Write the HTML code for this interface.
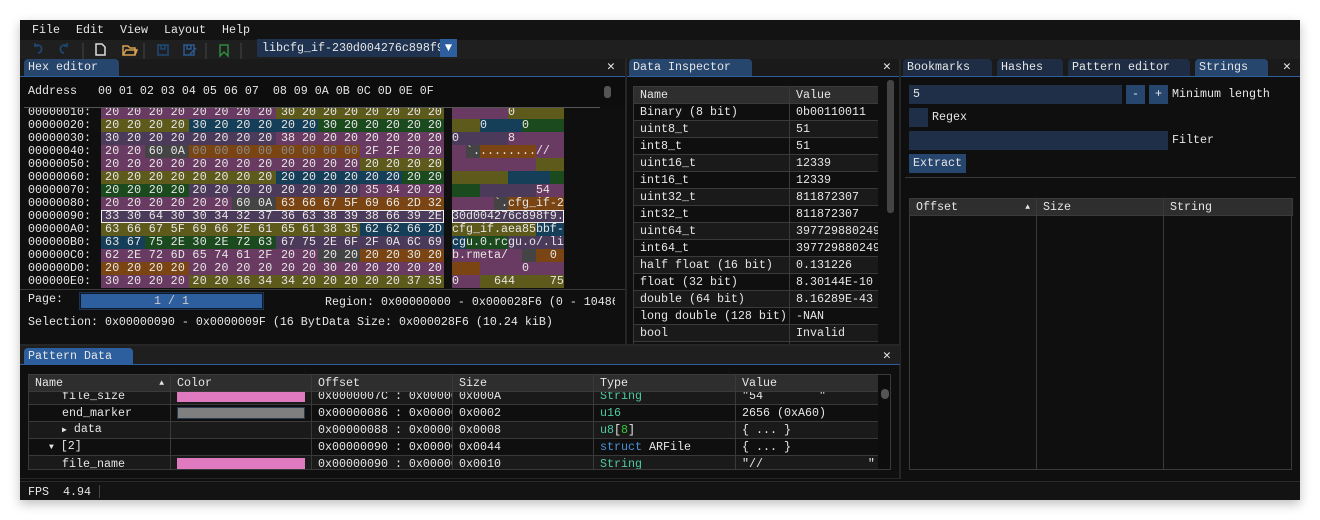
<!DOCTYPE html>
<html><head><meta charset="utf-8"><style>
*{margin:0;padding:0;box-sizing:border-box}
body{width:1320px;height:520px;background:#fff;position:relative;overflow:hidden;font-family:"Liberation Mono","DejaVu Sans Mono",monospace;font-size:11.67px;color:#e6e6e6;line-height:13px}
.a{position:absolute;white-space:pre}
#win{position:absolute;left:20px;top:20px;width:1280px;height:480px;background:#0f0f0f;box-shadow:0 4px 10px rgba(0,0,0,.25)}
.tab{position:absolute;height:17px;background:#1e2d44;border-radius:4px 4px 0 0;padding:2px 4px}
.x{position:absolute;font-size:13px}
.bg{position:absolute;height:13px}
.P{background:#6a3b62}.O{background:#5e5a1c}.B{background:#153e58}.G{background:#1a4a1e}.D{background:#4b3a5a}.R{background:#7a4512}.K{background:#444}
.hx{position:absolute;left:105px;letter-spacing:.29px}
.hx2{position:absolute;left:281px}
.as{position:absolute;left:452px}
table{border-collapse:collapse;position:absolute;table-layout:fixed}
td{border:1px solid #3a3a3a;height:17px;padding:0 6px;white-space:nowrap;overflow:hidden}
td.pre{white-space:pre}
.th td{background:#2e2e2f}
.r1 td{background:#0f0f0f}.r2 td{background:#1a1a1a}
.dim{color:#8a8a8a}
</style></head><body>
<div id="win"></div>
<div class="a" style="left:20px;top:20px;width:1280px;height:20px;background:#131313"></div>
<div class="a" style="left:32px;top:24px">File</div>
<div class="a" style="left:76px;top:24px">Edit</div>
<div class="a" style="left:120px;top:24px">View</div>
<div class="a" style="left:164px;top:24px">Layout</div>
<div class="a" style="left:222px;top:24px">Help</div>
<div class="a" style="left:20px;top:40px;width:1280px;height:19px;background:#1f1f1f"></div>
<svg class="a" style="left:20px;top:36px" width="460" height="25">
<g fill="none" stroke-width="1.5">
<path d="M18 17 A4 4 0 1 0 15 10 L15 7 M15 10 L18 10" stroke="#1f4a78"/>
<path d="M44 17 A4 4 0 1 1 47 10 L47 7 M47 10 L44 10" stroke="#1f4a78"/>
<path d="M76 8 L82 8 L85 11 L85 19 L76 19 Z" stroke="#ddd"/>
<path d="M103 10 L108 10 L110 12 L115 12 L115 19 L103 19 Z M103 19 L106 14 L117 14 L115 19" stroke="#d6a050"/>
<path d="M138 9 L148 9 L148 19 L138 19 Z M141 9 L141 13 L145 13 L145 9" stroke="#1f4a78"/>
<path d="M164 9 L174 9 L174 19 L164 19 Z M167 9 L167 13 L171 13 L171 9 M170 18 L176 12" stroke="#2a5a92"/>
<path d="M200 9 L208 9 L208 20 L204 16 L200 20 Z" stroke="#2e8a3a"/>
</g>
<g stroke="#444"><path d="M63 7V23M124 7V23M186 7V23M221 7V23"/></g>
</svg>
<div class="a" style="left:257px;top:39px;width:200px;height:18px;background:#1f3350"></div>
<div class="a" style="left:440px;top:39px;width:17px;height:18px;background:#2d5f9e;color:#fff;text-align:center;font-size:12px;line-height:18px">▼</div>
<div class="a" style="left:262px;top:42px;width:178px;overflow:hidden">libcfg_if-230d004276c898f9</div>

<div class="a" style="left:20px;top:59px;width:605px;height:18px;background:#1a1a1a;border-bottom:1px solid #2d5f9e"></div>
<div class="tab" style="left:24px;top:59px;width:95px;background:#26466e">Hex editor</div>
<div class="x a" style="left:607px;top:60px">✕</div>
<div class="a" style="left:20px;top:78px;width:605px;height:29px;background:#0d0d0d"></div>
<div class="a" style="left:28px;top:85px">Address   00 01 02 03 04 05 06 07  08 09 0A 0B 0C 0D 0E 0F</div>
<div class="a" style="left:604px;top:86px;width:7px;height:12px;background:#555;border-radius:3px"></div>
<div class="a" style="left:24px;top:107px;width:576px;height:182px;overflow:hidden">
<div style="position:absolute;left:-24px;top:-107px;width:700px;height:400px">
<div class="bg P" style="left:101px;top:106px;width:175px"></div><div class="bg O" style="left:276px;top:106px;width:168px"></div>
<div class="bg P" style="left:452px;top:106px;width:56px"></div><div class="bg O" style="left:508px;top:106px;width:56px"></div>
<div class="a" style="left:28px;top:106px">00000010:</div><div class="hx" style="top:106px">20 20 20 20 20 20 20 20</div><div class="hx2" style="top:106px">30 20 20 20 20 20 20 20</div><div class="as" style="top:106px">        0       </div>
<div class="bg O" style="left:101px;top:119px;width:87.5px"></div><div class="bg B" style="left:188.5px;top:119px;width:129.5px"></div><div class="bg G" style="left:318px;top:119px;width:126px"></div>
<div class="bg O" style="left:452px;top:119px;width:28px"></div><div class="bg B" style="left:480px;top:119px;width:42px"></div><div class="bg G" style="left:522px;top:119px;width:42px"></div>
<div class="a" style="left:28px;top:119px">00000020:</div><div class="hx" style="top:119px">20 20 20 20 30 20 20 20</div><div class="hx2" style="top:119px">20 20 30 20 20 20 20 20</div><div class="as" style="top:119px">    0     0     </div>
<div class="bg D" style="left:101px;top:132px;width:175px"></div><div class="bg P" style="left:276px;top:132px;width:168px"></div>
<div class="bg D" style="left:452px;top:132px;width:56px"></div><div class="bg P" style="left:508px;top:132px;width:56px"></div>
<div class="a" style="left:28px;top:132px">00000030:</div><div class="hx" style="top:132px">30 20 20 20 20 20 20 20</div><div class="hx2" style="top:132px">38 20 20 20 20 20 20 20</div><div class="as" style="top:132px">0       8       </div>
<div class="bg P" style="left:101px;top:145px;width:43.75px"></div><div class="bg K" style="left:144.75px;top:145px;width:43.75px"></div><div class="bg R" style="left:188.5px;top:145px;width:171.5px"></div><div class="bg P" style="left:360px;top:145px;width:84px"></div>
<div class="bg P" style="left:452px;top:145px;width:14px"></div><div class="bg K" style="left:466px;top:145px;width:14px"></div><div class="bg R" style="left:480px;top:145px;width:56px"></div><div class="bg P" style="left:536px;top:145px;width:28px"></div>
<div class="a" style="left:28px;top:145px">00000040:</div><div class="hx" style="top:145px">20 20 60 0A <span class="dim">00 00 00 00</span></div><div class="hx2" style="top:145px"><span class="dim">00 00 00 00</span> 2F 2F 20 20</div><div class="as" style="top:145px">  `.........//  </div>
<div class="bg P" style="left:101px;top:158px;width:259px"></div><div class="bg O" style="left:360px;top:158px;width:84px"></div>
<div class="bg P" style="left:452px;top:158px;width:84px"></div><div class="bg O" style="left:536px;top:158px;width:28px"></div>
<div class="a" style="left:28px;top:158px">00000050:</div><div class="hx" style="top:158px">20 20 20 20 20 20 20 20</div><div class="hx2" style="top:158px">20 20 20 20 20 20 20 20</div>
<div class="bg O" style="left:101px;top:171px;width:175px"></div><div class="bg B" style="left:276px;top:171px;width:126px"></div><div class="bg G" style="left:402px;top:171px;width:42px"></div>
<div class="bg O" style="left:452px;top:171px;width:56px"></div><div class="bg B" style="left:508px;top:171px;width:42px"></div><div class="bg G" style="left:550px;top:171px;width:14px"></div>
<div class="a" style="left:28px;top:171px">00000060:</div><div class="hx" style="top:171px">20 20 20 20 20 20 20 20</div><div class="hx2" style="top:171px">20 20 20 20 20 20 20 20</div>
<div class="bg G" style="left:101px;top:184px;width:87.5px"></div><div class="bg D" style="left:188.5px;top:184px;width:171.5px"></div><div class="bg P" style="left:360px;top:184px;width:84px"></div>
<div class="bg G" style="left:452px;top:184px;width:28px"></div><div class="bg D" style="left:480px;top:184px;width:56px"></div><div class="bg P" style="left:536px;top:184px;width:28px"></div>
<div class="a" style="left:28px;top:184px">00000070:</div><div class="hx" style="top:184px">20 20 20 20 20 20 20 20</div><div class="hx2" style="top:184px">20 20 20 20 35 34 20 20</div><div class="as" style="top:184px">            54  </div>
<div class="bg P" style="left:101px;top:197px;width:131.25px"></div><div class="bg K" style="left:232.25px;top:197px;width:43.75px"></div><div class="bg R" style="left:276px;top:197px;width:168px"></div>
<div class="bg P" style="left:452px;top:197px;width:42px"></div><div class="bg K" style="left:494px;top:197px;width:14px"></div><div class="bg R" style="left:508px;top:197px;width:56px"></div>
<div class="a" style="left:28px;top:197px">00000080:</div><div class="hx" style="top:197px">20 20 20 20 20 20 60 0A</div><div class="hx2" style="top:197px">63 66 67 5F 69 66 2D 32</div><div class="as" style="top:197px">      `.cfg_if-2</div>
<div class="bg D" style="left:101px;top:210px;width:343px;border:1px solid #eee"></div>
<div class="bg D" style="left:452px;top:210px;width:112px;border:1px solid #eee"></div>
<div class="a" style="left:28px;top:210px">00000090:</div><div class="hx" style="top:210px">33 30 64 30 30 34 32 37</div><div class="hx2" style="top:210px">36 63 38 39 38 66 39 2E</div><div class="as" style="top:210px">30d004276c898f9.</div>
<div class="bg O" style="left:101px;top:223px;width:259px"></div><div class="bg B" style="left:360px;top:223px;width:84px"></div>
<div class="bg O" style="left:452px;top:223px;width:84px"></div><div class="bg B" style="left:536px;top:223px;width:28px"></div>
<div class="a" style="left:28px;top:223px">000000A0:</div><div class="hx" style="top:223px">63 66 67 5F 69 66 2E 61</div><div class="hx2" style="top:223px">65 61 38 35 62 62 66 2D</div><div class="as" style="top:223px">cfg_if.aea85bbf-</div>
<div class="bg B" style="left:101px;top:236px;width:43.75px"></div><div class="bg G" style="left:144.75px;top:236px;width:131.25px"></div><div class="bg D" style="left:276px;top:236px;width:168px"></div>
<div class="bg B" style="left:452px;top:236px;width:14px"></div><div class="bg G" style="left:466px;top:236px;width:42px"></div><div class="bg D" style="left:508px;top:236px;width:56px"></div>
<div class="a" style="left:28px;top:236px">000000B0:</div><div class="hx" style="top:236px">63 67 75 2E 30 2E 72 63</div><div class="hx2" style="top:236px">67 75 2E 6F 2F 0A 6C 69</div><div class="as" style="top:236px">cgu.0.rcgu.o/.li</div>
<div class="bg P" style="left:101px;top:249px;width:217px"></div><div class="bg K" style="left:318px;top:249px;width:42px"></div><div class="bg R" style="left:360px;top:249px;width:84px"></div>
<div class="bg P" style="left:452px;top:249px;width:70px"></div><div class="bg K" style="left:522px;top:249px;width:14px"></div><div class="bg R" style="left:536px;top:249px;width:28px"></div>
<div class="a" style="left:28px;top:249px">000000C0:</div><div class="hx" style="top:249px">62 2E 72 6D 65 74 61 2F</div><div class="hx2" style="top:249px">20 20 20 20 20 20 30 20</div><div class="as" style="top:249px">b.rmeta/      0 </div>
<div class="bg R" style="left:101px;top:262px;width:87.5px"></div><div class="bg P" style="left:188.5px;top:262px;width:255.5px"></div>
<div class="bg R" style="left:452px;top:262px;width:28px"></div><div class="bg P" style="left:480px;top:262px;width:84px"></div>
<div class="a" style="left:28px;top:262px">000000D0:</div><div class="hx" style="top:262px">20 20 20 20 20 20 20 20</div><div class="hx2" style="top:262px">20 20 30 20 20 20 20 20</div><div class="as" style="top:262px">          0     </div>
<div class="bg P" style="left:101px;top:275px;width:87.5px"></div><div class="bg O" style="left:188.5px;top:275px;width:255.5px"></div>
<div class="bg P" style="left:452px;top:275px;width:28px"></div><div class="bg O" style="left:480px;top:275px;width:84px"></div>
<div class="a" style="left:28px;top:275px">000000E0:</div><div class="hx" style="top:275px">30 20 20 20 20 20 36 34</div><div class="hx2" style="top:275px">34 20 20 20 20 20 37 35</div><div class="as" style="top:275px">0     644     75</div>
</div></div>
<div class="a" style="left:24px;top:107px;width:576px;height:1px;background:#555"></div>
<div class="a" style="left:20px;top:289px;width:605px;height:1px;background:#3a3a3a"></div>
<div class="a" style="left:28px;top:293px">Page:</div>
<div class="a" style="left:79px;top:292px;width:185px;height:18px;background:#0d1a2a;border:1px solid #1f3350"></div>
<div class="a" style="left:81px;top:294px;width:181px;height:14px;background:#2d5f9e;text-align:center;color:#ccc;line-height:14px">1 / 1</div>
<div class="a" style="left:325px;top:296px;width:290px;overflow:hidden">Region: 0x00000000 - 0x000028F6 (0 - 10486)</div>
<div class="a" style="left:28px;top:316px">Selection: 0x00000090 - 0x0000009F (16 Byt</div>
<div class="a" style="left:322px;top:316px">Data Size: 0x000028F6 (10.24 kiB)</div>

<div class="a" style="left:625px;top:59px;width:2px;height:287px;background:#262626"></div>
<div class="a" style="left:899px;top:59px;width:2px;height:420px;background:#262626"></div>
<div class="a" style="left:20px;top:344px;width:880px;height:2px;background:#262626"></div>

<div class="a" style="left:627px;top:59px;width:272px;height:18px;background:#1a1a1a;border-bottom:1px solid #2d5f9e"></div>
<div class="tab" style="left:629px;top:59px;width:123px;background:#26466e">Data Inspector</div>
<div class="x a" style="left:883px;top:60px">✕</div>
<div class="a" style="left:887px;top:80px;width:7px;height:133px;background:#444;border-radius:3px"></div>
<div class="a" style="left:633px;top:86px;width:245px;height:258px;overflow:hidden">
<table style="left:0;top:0;width:245px">
<colgroup><col style="width:156px"><col style="width:89px"></colgroup>
<tr class="th"><td>Name</td><td>Value</td></tr>
<tr class="r1"><td>Binary (8 bit)</td><td>0b00110011</td></tr>
<tr class="r2"><td>uint8_t</td><td>51</td></tr>
<tr class="r1"><td>int8_t</td><td>51</td></tr>
<tr class="r2"><td>uint16_t</td><td>12339</td></tr>
<tr class="r1"><td>int16_t</td><td>12339</td></tr>
<tr class="r2"><td>uint32_t</td><td>811872307</td></tr>
<tr class="r1"><td>int32_t</td><td>811872307</td></tr>
<tr class="r2"><td>uint64_t</td><td>3977298802496</td></tr>
<tr class="r1"><td>int64_t</td><td>3977298802496</td></tr>
<tr class="r2"><td>half float (16 bit)</td><td>0.131226</td></tr>
<tr class="r1"><td>float (32 bit)</td><td>8.30144E-10</td></tr>
<tr class="r2"><td>double (64 bit)</td><td>8.16289E-43</td></tr>
<tr class="r1"><td>long double (128 bit)</td><td>-NAN</td></tr>
<tr class="r2"><td>bool</td><td>Invalid</td></tr>
<tr class="r1"><td></td><td></td></tr>
</table></div>

<div class="a" style="left:901px;top:59px;width:399px;height:18px;background:#1a1a1a;border-bottom:1px solid #2d5f9e"></div>
<div class="tab" style="left:903px;top:59px;width:89px">Bookmarks</div>
<div class="tab" style="left:997px;top:59px;width:66px">Hashes</div>
<div class="tab" style="left:1068px;top:59px;width:122px">Pattern editor</div>
<div class="tab" style="left:1195px;top:59px;width:73px;background:#26466e">Strings</div>
<div class="x a" style="left:1283px;top:60px">✕</div>
<div class="a" style="left:909px;top:85px;width:213px;height:19px;background:#1f2f48;padding:3px 4px">5</div>
<div class="a" style="left:1126px;top:85px;width:19px;height:19px;background:#26466e;text-align:center;line-height:19px">-</div>
<div class="a" style="left:1149px;top:85px;width:19px;height:19px;background:#26466e;text-align:center;line-height:19px">+</div>
<div class="a" style="left:1172px;top:88px">Minimum length</div>
<div class="a" style="left:909px;top:108px;width:19px;height:19px;background:#1f2f48"></div>
<div class="a" style="left:932px;top:111px">Regex</div>
<div class="a" style="left:909px;top:131px;width:259px;height:19px;background:#1f2f48"></div>
<div class="a" style="left:1172px;top:134px">Filter</div>
<div class="a" style="left:909px;top:154px;width:57px;height:19px;background:#26466e;padding:3px 4px">Extract</div>
<div class="a" style="left:905px;top:177px;width:391px;height:1px;background:#3a3a3a"></div>
<div class="a" style="left:909px;top:198px;width:383px;height:272px;border:1px solid #3a3a3a"></div>
<table style="left:909px;top:198px;width:383px">
<colgroup><col style="width:127px"><col style="width:127px"><col style="width:129px"></colgroup>
<tr class="th"><td>Offset<span style="float:right;font-size:8px">▲</span></td><td>Size</td><td>String</td></tr>
</table>
<div class="a" style="left:1036px;top:215px;width:1px;height:255px;background:#3a3a3a"></div>
<div class="a" style="left:1163px;top:215px;width:1px;height:255px;background:#3a3a3a"></div>

<div class="a" style="left:20px;top:346px;width:880px;height:19px;background:#1f1f1f;border-bottom:1px solid #2d5f9e"></div>
<div class="tab" style="left:24px;top:348px;width:109px;background:#2d5f9e">Pattern Data</div>
<div class="x a" style="left:883px;top:349px">✕</div>
<div class="a" style="left:20px;top:478px;width:880px;height:1px;background:#262626"></div>
<div class="a" style="left:28px;top:374px;width:863px;height:96px;overflow:hidden;border:1px solid #3a3a3a">
<table style="left:-1px;top:12px;width:850px">
<colgroup><col style="width:142px"><col style="width:141px"><col style="width:141px"><col style="width:141px"><col style="width:142px"><col style="width:143px"></colgroup>
<tr class="r2"><td style="padding-left:33px">file_size</td><td><div style="height:12px;background:#e07ac0"></div></td><td>0x0000007C : 0x00000085</td><td>0x000A</td><td style="color:#4ec9a0">String</td><td class="pre">"54        "</td></tr>
<tr class="r1"><td style="padding-left:33px">end_marker</td><td><div style="height:12px;background:#7f7f7f;border:1px solid #2a3a50"></div></td><td>0x00000086 : 0x00000087</td><td>0x0002</td><td style="color:#4ec9a0">u16</td><td>2656 (0xA60)</td></tr>
<tr class="r2"><td style="padding-left:33px"><span style="font-size:8px">▶</span> data</td><td></td><td>0x00000088 : 0x0000008F</td><td>0x0008</td><td><span style="color:#4ec9a0">u8</span>[<span style="color:#3c3">8</span>]</td><td>{ ... }</td></tr>
<tr class="r1"><td style="padding-left:20px"><span style="font-size:8px">▼</span> [2]</td><td></td><td>0x00000090 : 0x000000D3</td><td>0x0044</td><td><span style="color:#4a90d9">struct</span> ARFile</td><td>{ ... }</td></tr>
<tr class="r2"><td style="padding-left:33px">file_name</td><td><div style="height:12px;background:#e07ac0"></div></td><td>0x00000090 : 0x0000009F</td><td>0x0010</td><td style="color:#4ec9a0">String</td><td class="pre">"//               "</td></tr>
</table>
<table style="left:-1px;top:-1px;width:850px;z-index:2">
<colgroup><col style="width:142px"><col style="width:141px"><col style="width:141px"><col style="width:141px"><col style="width:142px"><col style="width:143px"></colgroup>
<tr class="th"><td>Name<span style="float:right;font-size:8px">▲</span></td><td>Color</td><td>Offset</td><td>Size</td><td>Type</td><td>Value</td></tr>
</table>
<div class="a" style="left:849px;top:0;width:14px;height:96px;background:#0d0d0d;z-index:3"></div>
<div class="a" style="left:852px;top:14px;width:8px;height:10px;background:#555;border-radius:4px;z-index:4"></div>
</div>

<div class="a" style="left:20px;top:481px;width:1280px;height:19px;background:#131313;border-top:1px solid #2a2a2a"></div>
<div class="a" style="left:28px;top:486px">FPS  4.94</div>
<div class="a" style="left:99px;top:485px;width:1px;height:13px;background:#444"></div>
</body></html>
